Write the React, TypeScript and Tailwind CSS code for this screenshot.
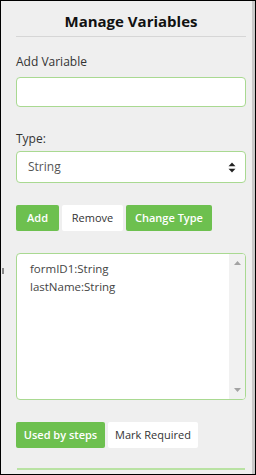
import React from 'react';

const font = { fontFamily: '"Open Sans", "Liberation Sans", sans-serif' };

function SortIcon() {
  return (
    <svg width="8" height="11" viewBox="0 0 8 11" className="text-[#222]">
      <path d="M4 0.5 L7.5 4.3 L0.5 4.3 Z" fill="currentColor" />
      <path d="M4 10.5 L7.5 6.7 L0.5 6.7 Z" fill="currentColor" />
    </svg>
  );
}

export default function App() {
  return (
    <div className="w-[256px] h-[475px] border border-black bg-[#efefef] overflow-hidden" style={font}>
      <div className="h-full border-r-[3px] border-[#c9c9c9] pl-[15px] pr-[6px] flex flex-col">
        {/* title */}
        <h1 className="mt-[10px] text-center text-[15px] font-bold text-[#111] leading-[20px]">
          Manage Variables
        </h1>
        <div className="mt-[5px] h-px bg-[#d6d6d6]" />

        {/* add variable */}
        <label className="mt-[17px] text-[12px] text-[#333] leading-[16px]">Add Variable</label>
        <div className="mt-[7px] h-[30px] bg-white border border-[#a9d991] rounded-[4px]" />

        {/* type */}
        <label className="mt-[24px] text-[12px] text-[#333] leading-[16px]">Type:</label>
        <div className="mt-[4px] h-[32px] bg-white border border-[#a9d991] rounded-[4px] flex items-center justify-between pl-[11px] pr-[9px]">
          <span className="text-[12px] text-[#555]">String</span>
          <SortIcon />
        </div>

        {/* buttons */}
        <div className="mt-[22px] flex gap-[3px] h-[26px] text-[11px] font-semibold">
          <button className="w-[43px] bg-[#6dc04f] text-white rounded-[2px]">Add</button>
          <button className="w-[61px] bg-white text-[#333] font-normal rounded-[2px]">Remove</button>
          <button className="w-[86px] bg-[#6dc04f] text-white rounded-[2px]">Change Type</button>
        </div>

        {/* variable list */}
        <div className="relative mt-[22px]">
          <div className="absolute left-[-14px] top-[15px] w-[2px] h-[6px] bg-[#888]" />
          <div className="h-[147px] bg-white border border-[#a9d991] rounded-[4px] flex overflow-hidden">
            <div className="flex-1 pl-[13px] pt-[6px] text-[11.5px] text-[#444] leading-[18px]">
              <div>formID1:String</div>
              <div>lastName:String</div>
            </div>
            <div className="w-[16px] bg-[#f1f1f1] flex flex-col items-center justify-between py-[7px]">
              <svg width="7" height="4" viewBox="0 0 7 4"><path d="M3.5 0 L7 4 L0 4 Z" fill="#a3a3a3" /></svg>
              <svg width="7" height="4" viewBox="0 0 7 4"><path d="M3.5 4 L7 0 L0 0 Z" fill="#a3a3a3" /></svg>
            </div>
          </div>
        </div>

        {/* bottom buttons */}
        <div className="mt-[22px] flex gap-[3px] h-[26px] text-[11px] font-semibold">
          <button className="w-[89px] bg-[#6dc04f] text-white rounded-[2px]">Used by steps</button>
          <button className="w-[90px] bg-white text-[#333] font-normal rounded-[2px]">Mark Required</button>
        </div>

        <div className="mt-[20px] mx-[1px] h-[2px] bg-[#b9e2a3]" />
      </div>
    </div>
  );
}
